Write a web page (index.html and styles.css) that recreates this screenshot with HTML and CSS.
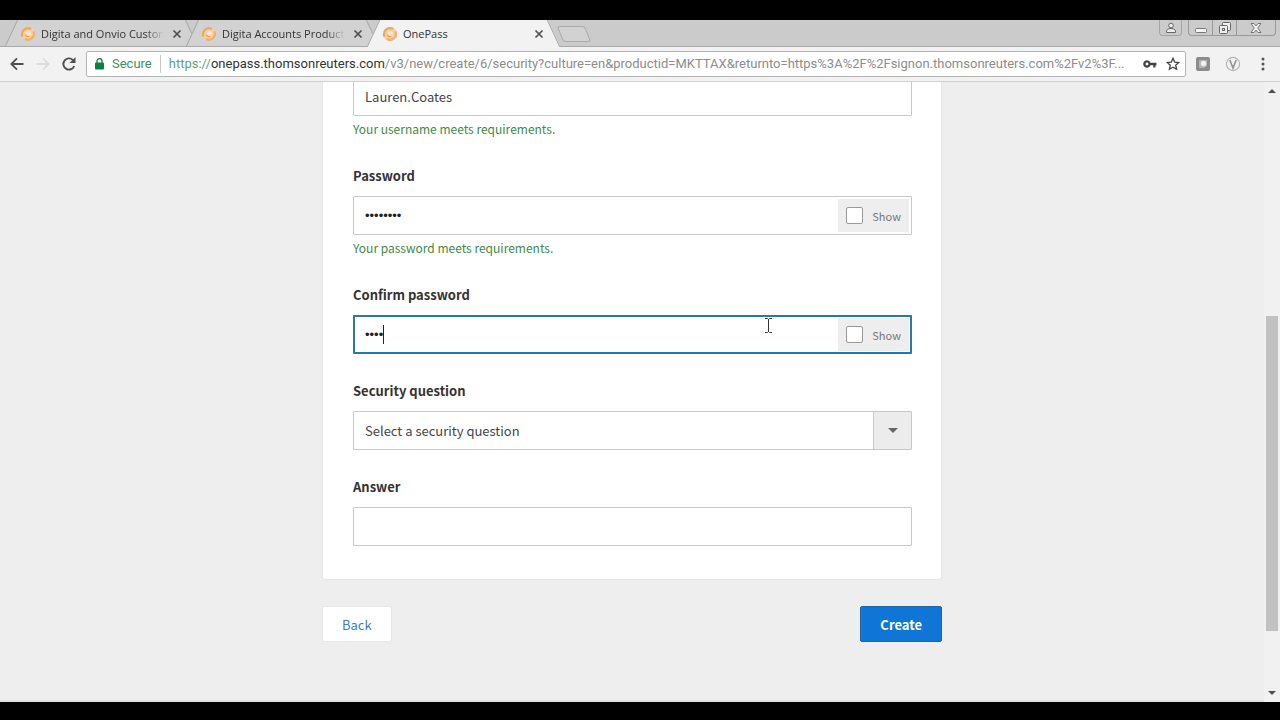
FILE: index.html
```html
<!DOCTYPE html>
<html lang="en">
<head>
<meta charset="utf-8">
<title>OnePass</title>
<link rel="stylesheet" href="styles.css">
</head>
<body>
<svg class="defs" width="0" height="0" aria-hidden="true">
  <symbol id="swirl" viewBox="0 0 16 16">
    <circle cx="8" cy="8" r="7.2" fill="#f3cfa4"/>
    <path d="M2.500 10.500A6 6 0 0 1 11 3" fill="none" stroke="#eda760" stroke-width="2.200"/>
    <path d="M13.500 5.500A6 6 0 0 1 5 13" fill="none" stroke="#efb071" stroke-width="2.200"/>
    <circle cx="8.500" cy="7.500" r="2.600" fill="#f8e3cb"/>
    <path d="M5.400 8.600c.4 1.800 2.200 2.500 3.800 1.900" fill="none" stroke="#eba257" stroke-width="1.300"/>
  </symbol>
  <symbol id="cross" viewBox="0 0 10 10"><path d="M1.500 1.500l7 7M8.500 1.500l-7 7" stroke="#505050" stroke-width="1.700"/></symbol>
</svg>

<header class="chrome">
  <div class="tab-strip">
    <nav class="tabs" aria-label="Tabs">
      <div class="tab">
        <svg class="favicon"><use href="#swirl"/></svg>
        <span class="tab-title faded">Digita and Onvio Custon</span>
        <button class="tab-close" aria-label="Close tab"><svg width="10" height="10"><use href="#cross"/></svg></button>
      </div>
      <div class="tab">
        <svg class="favicon"><use href="#swirl"/></svg>
        <span class="tab-title faded">Digita Accounts Product</span>
        <button class="tab-close" aria-label="Close tab"><svg width="10" height="10"><use href="#cross"/></svg></button>
      </div>
      <div class="tab active">
        <svg class="favicon"><use href="#swirl"/></svg>
        <span class="tab-title">OnePass</span>
        <button class="tab-close" aria-label="Close tab"><svg width="10" height="10"><use href="#cross"/></svg></button>
      </div>
      <button class="new-tab" aria-label="New tab"></button>
    </nav>
    <div class="window-controls">
      <button class="win user" aria-label="Profile">
        <svg width="12" height="12" viewBox="0 0 12 12" fill="#eee" stroke="#666"><circle cx="6" cy="3.500" r="2.300"/><path d="M1.500 10.500V8.500Q3 6.500 6 6.500t4.500 2v2z"/></svg>
      </button>
      <div class="win-group">
        <button class="win min" aria-label="Minimize"><svg width="12" height="12" viewBox="0 0 12 12"><rect x=".5" y="6.500" width="11" height="4" rx="1" fill="#f4f4f4" stroke="#777"/></svg></button>
        <button class="win max" aria-label="Restore"><svg width="14" height="14" viewBox="0 0 14 14" fill="#eee" stroke="#666"><rect x="4.500" y="1.500" width="8" height="8" rx="1"/><rect x="1.500" y="4.500" width="8" height="8" rx="1"/><rect x="4.500" y="7.500" width="2" height="2"/></svg></button>
        <button class="win close" aria-label="Close"><svg width="12" height="12" viewBox="0 0 12 12"><path d="M1 1.500h3l2 2.500 2-2.500h3L7.700 6 11 10.500H8L6 8l-2 2.500H1L4.300 6z" fill="#f4f4f4" stroke="#777"/></svg></button>
      </div>
    </div>
  </div>

  <div class="toolbar">
    <button class="tool" aria-label="Back"><svg width="16" height="16" viewBox="0 0 16 16" fill="none" stroke="#505050" stroke-width="1.800"><path d="M14.500 8H2.500M8 2.300L2.300 8 8 13.700"/></svg></button>
    <button class="tool" aria-label="Forward"><svg width="16" height="16" viewBox="0 0 16 16" fill="none" stroke="#dcdcdc" stroke-width="1.800"><path d="M1.500 8h12M8 2.300L13.700 8 8 13.700"/></svg></button>
    <button class="tool" aria-label="Reload"><svg width="16" height="16" viewBox="0 0 16 16"><path d="M13.200 10A5.600 5.600 0 1 1 12 4.100" fill="none" stroke="#505050" stroke-width="1.900"/><path d="M14.500 1v6h-6z" fill="#505050"/></svg></button>
    <div class="omnibox">
      <svg width="9" height="12" viewBox="0 0 9 12"><rect x="0" y="4.500" width="9" height="7" rx="1" fill="#0b8043"/><path d="M2 5V3.200a2.500 2.500 0 0 1 5 0V5" fill="none" stroke="#0b8043" stroke-width="1.300"/></svg>
      <span class="secure">Secure</span>
      <span class="url"><span class="scheme">https://</span><span class="host">onepass.thomsonreuters.com</span>/v3/new/create/6/security?culture=en&amp;productid=MKTTAX&amp;returnto=https%3A%2F%2Fsignon.thomsonreuters.com%2Fv2%3F...</span>
      <svg class="key" width="14" height="8" viewBox="0 0 14 8"><path d="M7.400 2.800H13.500V5.200H12.500V7.500H10.200V5.200H7.400A3.700 3.700 0 1 1 7.400 2.800z" fill="#444"/><circle cx="4" cy="4" r="1.400" fill="#fff"/></svg>
      <svg width="14" height="14" viewBox="0 0 14 14"><path d="M7 1.300l1.700 3.800 4.100.4-3.100 2.700.9 4.100L7 10.200l-3.600 2.100.9-4.100-3.100-2.700 4.100-.4z" fill="none" stroke="#444" stroke-width="1.300"/></svg>
    </div>
    <button class="tool ext" aria-label="Extension"><svg width="16" height="16" viewBox="0 0 16 16"><rect x="1" y="1" width="14" height="14" rx="2" fill="#8c8c8c"/><path d="M4 4h8v6l-3 2H4z" fill="#b5b5b5"/><circle cx="8.500" cy="7.500" r="2.700" fill="#f0f0f0"/></svg></button>
    <button class="tool ext" aria-label="Extension"><svg width="16" height="16" viewBox="0 0 16 16" fill="none"><circle cx="8" cy="8" r="6.600" stroke="#b5b5b5" stroke-width="1.200"/><path d="M4.800 4L8 12l3.200-8" stroke="#929292" stroke-width="1.600"/></svg></button>
    <button class="tool" aria-label="Menu"><svg width="4" height="14" viewBox="0 0 4 14" fill="#555"><circle cx="2" cy="2" r="1.500"/><circle cx="2" cy="7" r="1.500"/><circle cx="2" cy="12" r="1.500"/></svg></button>
  </div>
</header>

<div class="viewport">
  <main class="page">
    <form class="form">
      <div class="card">
        <div class="field">
          <input class="box" id="username" type="text" aria-label="Username" value="Lauren.Coates">
          <p class="hint">Your username meets requirements.</p>
        </div>
        <div class="field">
          <label class="label" for="password">Password</label>
          <div class="control">
            <input class="box secret" id="password" type="password" value="password">
            <label class="show"><input class="tick" type="checkbox">Show</label>
          </div>
          <p class="hint">Your password meets requirements.</p>
        </div>
        <div class="field">
          <label class="label" for="confirm">Confirm password</label>
          <div class="control">
            <input class="box secret focused" id="confirm" type="password" value="pass">
            <span class="caret"></span>
            <svg class="pointer" width="9" height="17" viewBox="0 0 9 17"><path d="M1 1.500h2.500l1 1 1-1H8M4.500 2v13M1 15.500h2.500l1-1 1 1H8" fill="none" stroke="#333"/></svg>
            <label class="show"><input class="tick" type="checkbox">Show</label>
          </div>
        </div>
        <div class="field">
          <label class="label" for="question">Security question</label>
          <div class="control">
            <select class="box" id="question"><option>Select a security question</option></select>
            <span class="drop"><svg width="10" height="5" viewBox="0 0 10 5"><path d="M0 0h10L5 5z" fill="#666"/></svg></span>
          </div>
        </div>
        <div class="field">
          <label class="label" for="answer">Answer</label>
          <input class="box" id="answer" type="text">
        </div>
      </div>
      <div class="actions">
        <button class="btn back" type="button">Back</button>
        <button class="btn create" type="button">Create</button>
      </div>
    </form>
  </main>
  <div class="scrollbar">
    <svg width="8" height="4" viewBox="0 0 8 4"><path d="M0 4h8L4 0z" fill="#505050"/></svg>
    <div class="track"><div class="thumb"></div></div>
    <svg width="8" height="4" viewBox="0 0 8 4"><path d="M0 0h8L4 4z" fill="#505050"/></svg>
  </div>
</div>
</body>
</html>
```
FILE: styles.css
```css
* { box-sizing: border-box; }

body {
  display: flex;
  flex-direction: column;
  height: 100vh;
  margin: 0;
  padding: 20px 0 18px;
  overflow: hidden;
  background: #000;
  font-family: "Noto Sans CJK SC", sans-serif;
}

button { margin: 0; padding: 0; border: 0; background: none; font: inherit; }
svg { display: block; flex: none; }
.defs { position: absolute; }

/* Browser frame */
.chrome { font-family: "Open Sans", "Noto Sans", sans-serif; }

.tab-strip {
  display: flex;
  justify-content: space-between;
  height: 27px;
  padding: 0 4px 0 11px;
  background: #cbcbcb;
  border-bottom: 1px solid #a9a9a9;
}
.tabs { display: flex; }
.tab {
  position: relative;
  z-index: 0;
  display: flex;
  align-items: center;
  width: 181px;
  height: 27px;
  padding: 0 10px 0 9px;
}
.tab::before, .tab::after {
  content: "";
  position: absolute;
  z-index: -1;
  top: 0;
  bottom: 1px;
  width: 60%;
  background: #d2d2d2;
}
.tab::before { left: 0; border-left: 1px solid #a4a4a4; transform: skewX(-25deg); }
.tab::after { right: 0; border-right: 1px solid #a4a4a4; transform: skewX(25deg); }
.tab.active { z-index: 1; }
.tab.active::before, .tab.active::after { bottom: 0; background: #f2f2f2; }
.favicon { width: 16px; height: 16px; margin-right: 5px; }
.tab-title {
  flex: 1;
  overflow: hidden;
  white-space: nowrap;
  font-size: 11px;
  line-height: 18px;
  color: #333;
}
.faded { -webkit-mask-image: linear-gradient(90deg, #000 85%, transparent); mask-image: linear-gradient(90deg, #000 85%, transparent); }
.tab-close { margin-left: 8px; }
.new-tab {
  width: 28px;
  height: 16px;
  margin: 6px 0 0 6px;
  border: 1px solid #aaa;
  border-radius: 3px;
  background: #d2d2d2;
  transform: skewX(22deg);
}

.window-controls { display: flex; gap: 6px; height: 16px; }
.win-group { display: flex; border: 1px solid #999; border-top: 0; border-radius: 0 0 4px 4px; }
.win { display: flex; align-items: center; justify-content: center; }
.win.user { width: 23px; border: 1px solid #a4a4a4; border-top: 0; border-radius: 0 0 4px 4px; }
.min, .max { width: 24px; border-right: 1px solid #999; }
.close { width: 38px; }

.toolbar {
  display: flex;
  align-items: center;
  height: 35px;
  padding: 0 8px;
  background: #f2f2f2;
  border-bottom: 1px solid #d0d0d0;
}
.tool { display: flex; align-items: center; justify-content: center; width: 18px; height: 28px; margin-right: 8px; }
.tool:last-child { margin: 0; }
.omnibox {
  display: flex;
  align-items: center;
  flex: 1;
  min-width: 0;
  height: 26px;
  margin-right: 8px;
  padding: 0 5px 0 8px;
  background: #fff;
  border: 1px solid #b4b4b4;
  border-radius: 2px;
  font-family: Roboto, sans-serif;
  font-size: 13px;
  line-height: 18px;
}
.secure { margin-left: 8px; padding-right: 8px; border-right: 1px solid #c8c8c8; color: #3f8f63; }
.url { flex: 1; margin-left: 8px; overflow: hidden; white-space: nowrap; color: #8c8c8c; }
.scheme { color: #5fa07c; }
.host { color: #333; }
.key { margin: 0 9px 0 8px; }
.ext { margin-right: 12px; }

/* Page */
.viewport { display: flex; flex: 1; min-height: 0; background: #eee; }
.page { flex: 1; overflow: hidden; border-bottom: 2px solid #e0e0e0; }
.form { max-width: 620px; margin: -5px auto 0; }
.card {
  display: flex;
  flex-direction: column;
  gap: 25px;
  padding: 0 29px 33px 30px;
  background: #fff;
  border: 1px solid #e6e6e6;
  border-top: 0;
  border-radius: 0 0 3px 3px;
}
.label {
  display: block;
  margin-bottom: 8px;
  font-size: 13px;
  line-height: 24px;
  font-weight: 700;
  color: #333;
}
.control { position: relative; }
.box {
  display: block;
  width: 100%;
  height: 39px;
  padding: 0 11px;
  background: #fff;
  border: 1px solid #c8c8c8;
  border-radius: 1px;
  outline: 0;
  font-family: inherit;
  font-size: 13px;
  color: #444;
  appearance: none;
}
.secret { font-family: "Liberation Sans", sans-serif; color: #222; }
.focused { padding: 0 10px; border: 2px solid #2e75a8; }
.hint { margin: 2px 0 0; font-size: 12px; line-height: 21px; color: #3f8a45; }
.show {
  position: absolute;
  top: 3px;
  right: 3px;
  bottom: 3px;
  display: flex;
  align-items: center;
  gap: 9px;
  padding: 0 8px;
  background: #eee;
  font-size: 11px;
  color: #777;
}
.tick {
  width: 17px;
  height: 17px;
  margin: 0;
  background: #fff;
  border: 1px solid #999;
  border-radius: 2px;
  appearance: none;
}
.caret { position: absolute; top: 10px; left: 30px; width: 1px; height: 19px; background: #222; }
.pointer { position: absolute; top: 2px; right: 139px; }
.drop {
  position: absolute;
  top: 1px;
  right: 1px;
  bottom: 1px;
  display: flex;
  align-items: center;
  justify-content: center;
  width: 38px;
  background: #ececec;
  border-left: 1px solid #c8c8c8;
  pointer-events: none;
}
.actions { display: flex; justify-content: space-between; margin-top: 26px; }
.btn { height: 36px; padding: 0 19px; border-radius: 2px; font-size: 13px; }
.back { background: #fff; border: 1px solid #e6e6e6; color: #3a80b5; }
.create { background: #0f75d6; border: 1px solid #2064a8; color: #fff; font-weight: 700; }

.scrollbar {
  display: flex;
  flex-direction: column;
  align-items: center;
  gap: 7px;
  width: 16px;
  padding: 7px 0;
  background: #f1f1f1;
}
.track { display: flex; flex: 1; align-self: stretch; padding: 0 2px; }
.thumb { flex: 1; height: 54%; margin-top: 216px; background: #c1c1c1; }
```
